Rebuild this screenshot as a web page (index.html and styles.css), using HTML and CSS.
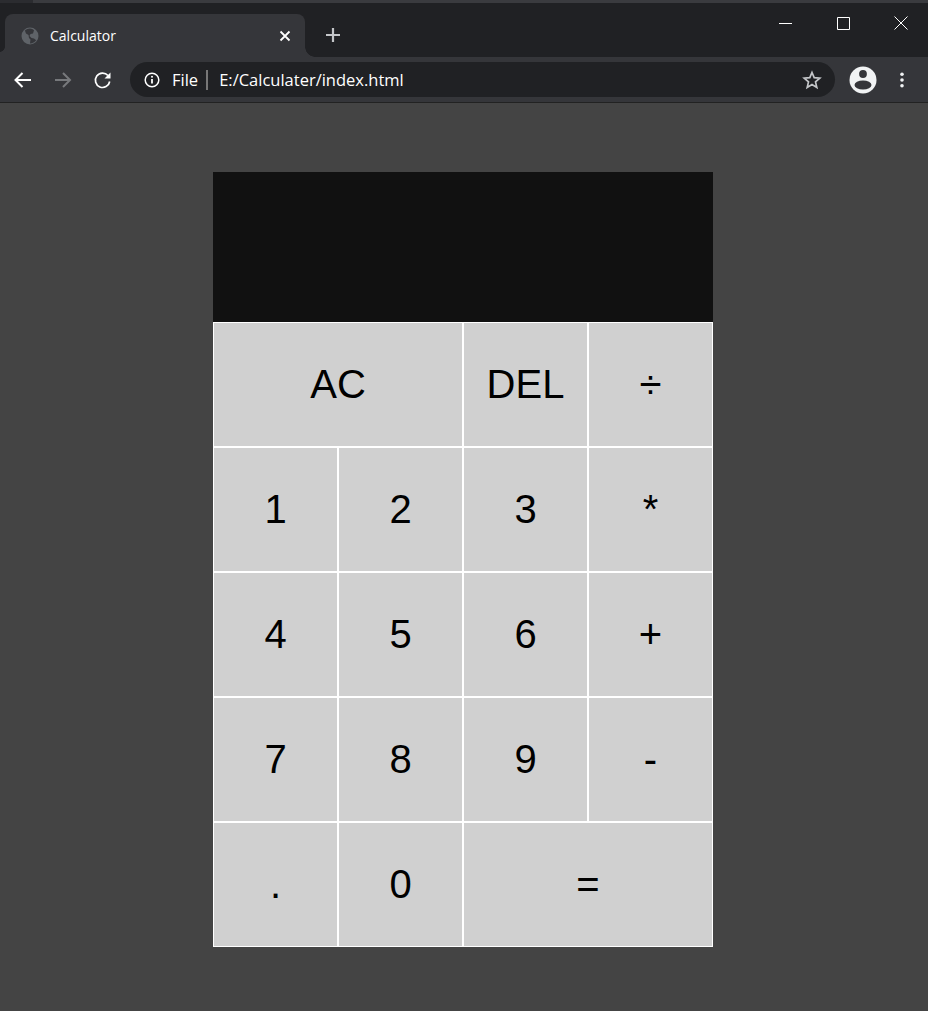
FILE: index.html
```html
<!DOCTYPE html>
<html lang="en">
<head>
<meta charset="utf-8">
<title>Calculator</title>
<link rel="stylesheet" href="styles.css">
</head>
<body>
<header class="browser">
  <div class="topline"></div>
  <div class="tabstrip">
    <div class="tab">
      <svg class="favicon" width="18" height="18" viewBox="0 0 18 18"><circle cx="9" cy="9" r="8.5" fill="#5f6368"/><path d="M9 1.500c-2 0-3.800.8-5.100 2L5 6.500 7.500 8l.5 3 1.500 1.500L9 16.500c2.500 0 4.800-1.300 6.200-3.200L13 11.500l-2.500-.5L8.500 9l1-2 2.500-.5 1-3.200C11.900 2.200 10.500 1.500 9 1.500z" fill="#35363a"/></svg>
      <span class="tab-title">Calculator</span>
      <svg class="tab-close" width="12" height="12" viewBox="0 0 12 12"><path d="M1.500 1.500l9 9M10.500 1.500l-9 9" stroke="#fff" stroke-width="1.800" fill="none"/></svg>
    </div>
    <svg class="newtab" width="16" height="16" viewBox="0 0 16 16"><path d="M8 1v14M1 8h14" stroke="#c4c6c9" stroke-width="2.200" fill="none"/></svg>
    <div class="winctl">
      <svg width="14" height="14" viewBox="0 0 14 14"><path d="M1 7.500h13" stroke="#fff" fill="none"/></svg>
      <svg width="14" height="14" viewBox="0 0 14 14"><path d="M1.500 1.500h12v12h-12z" stroke="#fff" fill="none"/></svg>
      <svg width="14" height="14" viewBox="0 0 14 14"><path d="M.5.500l13 13M13.500.500l-13 13" stroke="#fff" fill="none"/></svg>
    </div>
  </div>
  <div class="toolbar">
    <svg class="nav" width="20" height="20" viewBox="0 0 20 20"><path d="M18 10H2.500M9.500 3L2.500 10l7 7" stroke="#fff" stroke-width="2" fill="none"/></svg>
    <svg class="nav" width="20" height="20" viewBox="0 0 20 20"><path d="M2 10h15M10 3l7 7-7 7" stroke="#77797c" stroke-width="2" fill="none"/></svg>
    <svg class="nav" width="20" height="20" viewBox="0 0 20 20"><path d="M15 5.500A7.200 7.200 0 1 0 16.700 11.500" stroke="#fff" stroke-width="1.700" fill="none"/><path d="M17.500 2.500v6h-6z" fill="#fff"/></svg>
    <div class="omnibox">
      <svg class="info" width="16" height="16" viewBox="0 0 16 16"><circle cx="8" cy="8" r="6.800" stroke="#fff" stroke-width="1.500" fill="none"/><path d="M8 7v4.500" stroke="#fff" stroke-width="1.800"/><circle cx="8" cy="4.800" r="1" fill="#fff"/></svg>
      <span class="scheme">File</span>
      <span class="sep"></span>
      <span class="url">E:/Calculater/index.html</span>
      <svg class="star" width="20" height="20" viewBox="0 0 20 20"><path d="M10 2.500l2.200 5.200 5.600.5-4.300 3.700 1.300 5.500L10 14.500l-4.800 2.900 1.300-5.500-4.300-3.700 5.600-.5z" stroke="#c4c6c9" stroke-width="1.700" fill="none"/></svg>
    </div>
    <svg class="avatar" width="28" height="28" viewBox="0 0 28 28"><circle cx="14" cy="14" r="13.500" fill="#f1f3f4"/><circle cx="14" cy="8" r="3.900" fill="#35363a"/><ellipse cx="14" cy="19" rx="8.500" ry="4.500" fill="#35363a"/></svg>
    <svg class="menu" width="4" height="18" viewBox="0 0 4 18"><circle cx="2" cy="3.300" r="1.800" fill="#f1f3f4"/><circle cx="2" cy="9" r="1.800" fill="#f1f3f4"/><circle cx="2" cy="14.700" r="1.800" fill="#f1f3f4"/></svg>
  </div>
</header>
<main class="page">
  <div class="calc">
    <div class="display"></div>
    <button class="key wide">AC</button>
    <button class="key">DEL</button>
    <button class="key">÷</button>
    <button class="key">1</button>
    <button class="key">2</button>
    <button class="key">3</button>
    <button class="key">*</button>
    <button class="key">4</button>
    <button class="key">5</button>
    <button class="key">6</button>
    <button class="key">+</button>
    <button class="key">7</button>
    <button class="key">8</button>
    <button class="key">9</button>
    <button class="key">-</button>
    <button class="key">.</button>
    <button class="key">0</button>
    <button class="key wide">=</button>
  </div>
</main>
</body>
</html>
```
FILE: styles.css
```css
* { box-sizing: border-box; }
html, body { margin: 0; height: 100%; }
body {
  background: #444;
  display: flex;
  flex-direction: column;
  overflow: hidden;
  font-family: "Open Sans", "Liberation Sans", sans-serif;
}
.browser { background: #202124; flex: none; }
.topline {
  height: 3px;
  background: linear-gradient(90deg, #2b2c30 33px, #3a3b3f 33px);
}
.tabstrip {
  height: 54px;
  display: flex;
  align-items: flex-end;
  padding-left: 5px;
}
.tab {
  position: relative;
  width: 300px;
  height: 43px;
  background: #35363a;
  border-radius: 8px 8px 0 0;
  display: flex;
  align-items: center;
  padding: 0 14px 0 16px;
  color: #fff;
}
.tab::before,
.tab::after {
  content: "";
  position: absolute;
  bottom: 0;
  height: 10px;
}
.tab::before {
  left: -5px;
  width: 5px;
  background: radial-gradient(circle at 0 0, transparent 4.500px, #35363a 5px);
}
.tab::after {
  right: -10px;
  width: 10px;
  background: radial-gradient(circle at 100% 0, transparent 9.500px, #35363a 10px);
}
.favicon { flex: none; }
.tab-title { margin-left: 11px; font-size: 14px; flex: 1; }
.tab-close { flex: none; }
.newtab { margin: 0 0 14px 20px; flex: none; }
.winctl {
  margin-left: auto;
  align-self: flex-start;
  display: flex;
  gap: 44px;
  padding: 13px 20px 0 0;
}
.toolbar {
  height: 46px;
  background: #35363a;
  border-bottom: 1px solid #222;
  display: flex;
  align-items: center;
  padding-left: 13px;
}
.nav { flex: none; margin-right: 20px; }
.omnibox {
  margin-left: -3px;
  width: 705px;
  height: 35px;
  background: #202124;
  border-radius: 18px;
  display: flex;
  align-items: center;
  padding: 0 13px 0 14px;
  color: #fff;
  font-size: 16.5px;
}
.info { flex: none; }
.scheme { margin-left: 12px; }
.sep { width: 2px; height: 20px; background: #777; margin: 0 11px 0 8px; }
.url { flex: 1; }
.star { flex: none; }
.avatar { flex: none; margin-left: 14px; }
.menu { flex: none; margin-left: 23px; }
.page {
  flex: 1;
  padding: 69px 2px 0 0;
  display: flex;
  justify-content: center;
}
.calc {
  display: grid;
  grid-template-columns: repeat(4, 125px);
  grid-template-rows: 150px repeat(5, 125px);
  align-self: flex-start;
}
.display { grid-column: 1 / -1; background: #111; }
.key {
  border: 1px solid #fff;
  background: #d0d0d0;
  color: #000;
  font-family: "Liberation Sans", Arial, sans-serif;
  font-size: 40px;
  padding: 0;
}
.wide { grid-column: span 2; }
```
